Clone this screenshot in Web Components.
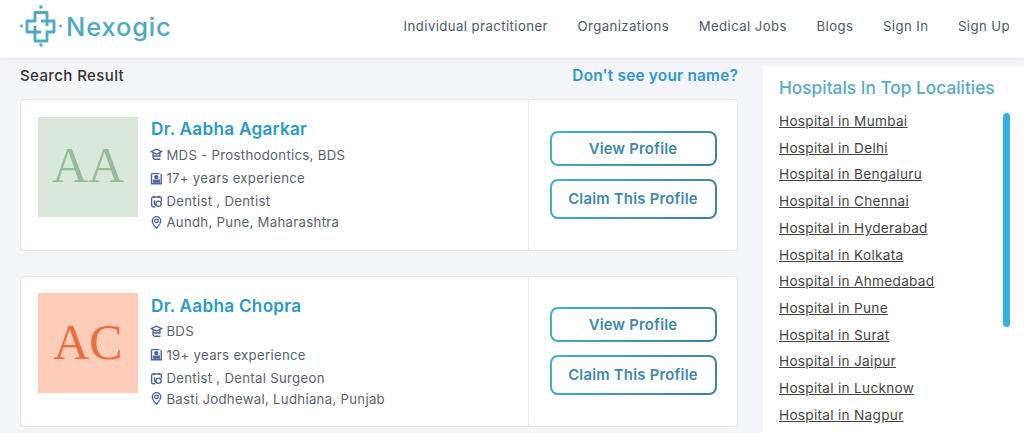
<!DOCTYPE html>
<html lang="en">
<head>
<meta charset="utf-8">
<title>Nexogic</title>
<style>
  html, body { margin: 0; height: 433px; overflow: hidden; background: #f3f5f8; }
  body { font-family: Inter, "Open Sans", sans-serif; color: #555; }
</style>
</head>
<body>
<nx-header></nx-header>
<nx-page>
  <nx-results>
    <nx-doctor name="Dr. Aabha Agarkar" initials="AA" bg="#d9e8da" fg="#93bd97" degree="MDS - Prosthodontics, BDS" exp="17+ years experience" spec="Dentist , Dentist" place="Aundh, Pune, Maharashtra"></nx-doctor>
    <nx-doctor name="Dr. Aabha Chopra" initials="AC" bg="#fecdb9" fg="#ee6d3c" degree="BDS" exp="19+ years experience" spec="Dentist , Dental Surgeon" place="Basti Jodhewal, Ludhiana, Punjab"></nx-doctor>
  </nx-results>
  <nx-sidebar></nx-sidebar>
</nx-page>
<script>
(function (customElements) {
  const FONT = 'Inter, "Open Sans", sans-serif';

  class NxHeader extends HTMLElement {
    connectedCallback() {
      const links = ['Individual practitioner', 'Organizations', 'Medical Jobs', 'Blogs', 'Sign In', 'Sign Up'];
      this.attachShadow({ mode: 'open' });
      this.shadowRoot.innerHTML = `
        <style>
          :host { display: flex; align-items: center; justify-content: space-between; height: 58px; padding: 0 14px 0 20px; background: #fff; box-shadow: 0 1px 3px rgba(0,0,0,.08); box-sizing: border-box; position: relative; font-family: ${FONT}; }
          .logo { display: flex; align-items: center; gap: 2px; margin-top: -6px; }
          .logo svg { display: block; }
          .word { font-size: 25.5px; font-weight: 500; letter-spacing: .85px; color: #4fa9c1; }
          nav { display: flex; gap: 29.500px; margin-top: -6px; }
          a { font-size: 13.2px; letter-spacing: .42px; color: #4c5a6a; text-decoration: none; white-space: nowrap; }
        </style>
        <div class="logo">
          <svg width="44" height="44" viewBox="0 0 44 44" fill="none" stroke="#4fa9c1" stroke-width="2.8" stroke-linejoin="round">
            <path d="M21 28H7V17h8V8.500h12V22"/>
            <path d="M21 17h13v11h-7v9H15V22"/>
            <g fill="#4fa9c1" stroke="none"><circle cx="21" cy="3" r="1.800"/><circle cx="21" cy="41" r="1.800"/><circle cx="1.500" cy="22" r="1.400"/><circle cx="40.500" cy="22" r="1.400"/></g>
          </svg>
          <span class="word">Nexogic</span>
        </div>
        <nav>${links.map((l) => `<a href="#">${l}</a>`).join('')}</nav>`;
    }
  }

  class NxPage extends HTMLElement {
    connectedCallback() {
      this.attachShadow({ mode: 'open' });
      this.shadowRoot.innerHTML = `
        <style>
          :host { display: flex; gap: 25px; padding-left: 20px; align-items: flex-start; }
        </style>
        <slot></slot>`;
    }
  }

  class NxResults extends HTMLElement {
    connectedCallback() {
      this.attachShadow({ mode: 'open' });
      this.shadowRoot.innerHTML = `
        <style>
          :host { display: block; width: 718px; font-family: ${FONT}; }
          .top { display: flex; justify-content: space-between; align-items: center; height: 41px; padding-bottom: 6px; box-sizing: border-box; }
          .title { font-size: 15px; font-weight: 500; letter-spacing: .4px; color: #333; }
          .miss { font-size: 15.4px; font-weight: 600; letter-spacing: .2px; color: #2f97c9; }
          .list { display: flex; flex-direction: column; gap: 25.100px; }
        </style>
        <div class="top"><span class="title">Search Result</span><span class="miss">Don't see your name?</span></div>
        <div class="list"><slot></slot></div>`;
    }
  }

  // little blue icons in front of the doctor rows
  const ICONS = {
    degree: '<path d="M1.500 4.500L8 1.500l6.500 3L8 7.500zM3.800 6v6c0 1 1 1.800 2 1.800h7M3.800 9.800h8M12.200 6v5"/>',
    exp: '<path d="M1.800 2h9.700M13.800 2v12.500H1.800V2"/><path d="M4.300 10h7.200v2.500H4.300z" fill="currentColor"/><circle cx="7.800" cy="6.300" r="1.900" fill="currentColor"/>',
    spec: '<path d="M5 .800v3M11 .800v3M6.500 14.500H4a2 2 0 0 1-2-2v-8a2 2 0 0 1 2-2h8a2 2 0 0 1 2 2v3.500"/><circle cx="10.500" cy="10.800" r="3.200"/><path d="M5.500 6.500v3.500a2.500 2.500 0 0 0 2.500 2.500"/>',
    place: '<path d="M8 15.200C5 11.500 2.800 9 2.800 6a5.200 5.200 0 0 1 10.400 0C13.200 9 11 11.500 8 15.200z"/><circle cx="8" cy="6" r="2.200"/>',
  };

  class NxDoctor extends HTMLElement {
    connectedCallback() {
      const get = (k) => this.getAttribute(k);
      const row = (icon, text) => `<div class="row"><svg viewBox="0 0 16 16" width="13" height="13" fill="none" stroke="currentColor" stroke-width="1.700">${ICONS[icon]}</svg><span>${text}</span></div>`;
      this.attachShadow({ mode: 'open' });
      this.shadowRoot.innerHTML = `
        <style>
          :host { display: grid; grid-template-columns: 1fr 209px; height: 151.500px; background: #fff; border: 1px solid #e5e8ec; border-radius: 4px; box-sizing: border-box; font-family: ${FONT}; }
          .info { display: flex; gap: 13px; padding: 16.600px 17px 0; }
          .avatar { width: 100px; height: 100px; flex: none; display: flex; align-items: center; justify-content: center; padding-bottom: 3px; box-sizing: border-box; font: 50px "Liberation Serif", serif; background: ${get('bg')}; color: ${get('fg')}; }
          .text { padding-top: .6px; }
          h3 { margin: 0 0 2px; font-size: 17.2px; line-height: 24px; font-weight: 600; letter-spacing: .25px; color: #2b9ac4; }
          .row { display: flex; align-items: center; gap: 3px; height: 23.300px; font-size: 13.2px; letter-spacing: .3px; color: #5a6270; white-space: nowrap; }
          .row:last-child { height: 18px; }
          .row svg { margin-left: -.6px; }
          svg { color: #4a66a0; flex: none; }
          .actions { border-left: 1px solid #e5e8ec; display: flex; flex-direction: column; align-items: center; gap: 13px; padding-top: 30.600px; }
          button { width: 167px; background: linear-gradient(#fff, #fff) padding-box, linear-gradient(135deg, #44b4c2, #3d7f9e) border-box; border: 2px solid transparent; border-radius: 8px; color: #3f88a6; font: 600 14.8px ${FONT}; letter-spacing: .25px; padding: 0; }
          .view { height: 35px; padding-top: 1px; }
          .claim { height: 40px; }
        </style>
        <div class="info">
          <div class="avatar">${get('initials')}</div>
          <div class="text">
            <h3>${get('name')}</h3>
            ${row('degree', get('degree'))}
            ${row('exp', get('exp'))}
            ${row('spec', get('spec'))}
            ${row('place', get('place'))}
          </div>
        </div>
        <div class="actions">
          <button class="view">View Profile</button>
          <button class="claim">Claim This Profile</button>
        </div>`;
    }
  }

  class NxSidebar extends HTMLElement {
    connectedCallback() {
      const cities = ['Mumbai', 'Delhi', 'Bengaluru', 'Chennai', 'Hyderabad', 'Kolkata', 'Ahmedabad', 'Pune', 'Surat', 'Jaipur', 'Lucknow', 'Nagpur'];
      this.attachShadow({ mode: 'open' });
      this.shadowRoot.innerHTML = `
        <style>
          :host { display: block; flex: 1; height: 375px; margin-top: 8px; background: #fff; padding: 9px 0 0 16px; box-sizing: border-box; position: relative; overflow: hidden; font-family: ${FONT}; }
          h4 { margin: 0 0 7px; font-size: 17.3px; line-height: 26px; font-weight: 500; color: #5aa9c6; }
          a { display: block; font-size: 13.6px; letter-spacing: .3px; line-height: 26.700px; color: #444; white-space: nowrap; }
          .bar { position: absolute; top: 47px; right: 14px; width: 7px; height: 214px; border-radius: 4px; background: #36b0e2; }
        </style>
        <h4>Hospitals In Top Localities</h4>
        ${cities.map((c) => `<a href="#">Hospital in ${c}</a>`).join('')}
        <div class="bar"></div>`;
    }
  }

  customElements.define('nx-header', NxHeader);
  customElements.define('nx-page', NxPage);
  customElements.define('nx-results', NxResults);
  customElements.define('nx-doctor', NxDoctor);
  customElements.define('nx-sidebar', NxSidebar);
})(window.customElements);
</script>
</body>
</html>
